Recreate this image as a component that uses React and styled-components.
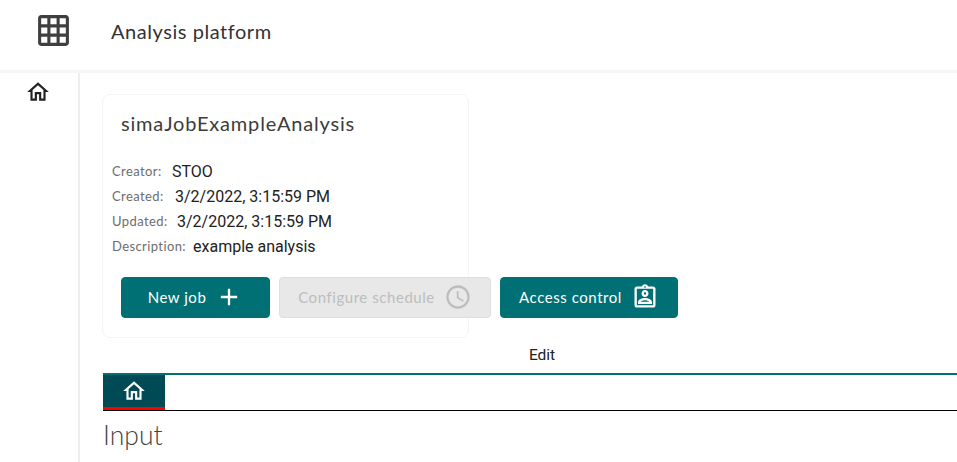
import React from "react";
import styled, { createGlobalStyle } from "styled-components";
// icons
import { MdGridOn, MdOutlineHome, MdAdd, MdOutlineAccessTime, MdOutlineAssignmentInd } from "react-icons/md";

const GlobalStyle = createGlobalStyle`
    html, body {
        margin: 0;
        padding: 0;
        background: #fff;
        overflow: hidden;
    }
    * {
        box-sizing: border-box;
    }
`;

function InfoLine({ label, value, labelWidth }) {
    return (
        <Line>
            <Label $width={labelWidth}>{label}</Label>
            <Value>{value}</Value>
        </Line>
    );
}

export default function App() {
    return (
        <Page>
            <GlobalStyle />
            <Header>
                <GridButton>
                    <MdGridOn />
                </GridButton>
                <AppTitle>Analysis platform</AppTitle>
            </Header>
            <Body>
                <Sidebar>
                    <MdOutlineHome />
                </Sidebar>
                <Content>
                    <Card>
                        <CardTitle>simaJobExampleAnalysis</CardTitle>
                        <Info>
                            <InfoLine label="Creator:" value="STOO" labelWidth={50} />
                            <InfoLine label="Created:" value="3/2/2022, 3:15:59 PM" labelWidth={53} />
                            <InfoLine label="Updated:" value="3/2/2022, 3:15:59 PM" labelWidth={55} />
                            <InfoLine label="Description:" value="example analysis" labelWidth={71} />
                        </Info>
                        <Actions>
                            <ActionButton $width={149}>
                                New job
                                <MdAdd />
                            </ActionButton>
                            <ActionButton $width={212} disabled>
                                Configure schedule
                                <MdOutlineAccessTime />
                            </ActionButton>
                            <ActionButton $width={178}>
                                Access control
                                <MdOutlineAssignmentInd />
                            </ActionButton>
                        </Actions>
                    </Card>
                    <EditLink>Edit</EditLink>
                    <TabBar>
                        <HomeTab>
                            <MdOutlineHome />
                        </HomeTab>
                    </TabBar>
                    <SectionTitle>Input</SectionTitle>
                </Content>
            </Body>
        </Page>
    );
}

const Page = styled.div`
    width: 957px;
    height: 462px;
    overflow: hidden;
    display: flex;
    flex-direction: column;
    font-family: "Lato", sans-serif;
`;
const Header = styled.header`
    height: 73px;
    flex-shrink: 0;
    display: flex;
    align-items: center;
    padding: 0 0 9px 33px;
    border-bottom: 3px solid #f6f6f6;
`;
const GridButton = styled.div`
    width: 40px;
    height: 40px;
    display: flex;
    align-items: center;
    justify-content: center;
    color: #3f3f3f;
    & svg {
        font-size: 37px;
    }
`;
const AppTitle = styled.h1`
    margin: 0 0 0 38px;
    font-size: 20px;
    font-weight: 400;
    letter-spacing: 0.55px;
    color: #333;
`;
const Body = styled.div`
    flex: 1;
    display: flex;
    min-height: 0;
`;
const Sidebar = styled.nav`
    width: 80px;
    flex-shrink: 0;
    padding: 6px 0 0 25px;
    border-right: 2px solid #eee;
    color: #222;
    & svg {
        display: block;
        font-size: 26px;
    }
`;
const Content = styled.main`
    flex: 1;
    min-width: 0;
    padding: 21px 0 0 23px;
`;
const Card = styled.section`
    width: 367px;
    height: 244px;
    margin-left: -1px;
    padding: 16px 18px 0;
    border: 1px solid #f5f5f5;
    border-radius: 8px;
`;
const CardTitle = styled.h2`
    margin: 0;
    font-size: 20px;
    line-height: 24px;
    font-weight: 400;
    letter-spacing: 0.82px;
    color: #3c3c3c;
`;
const Info = styled.div`
    margin: 26px 0 0 -9px;
    display: flex;
    flex-direction: column;
    gap: 5px;
`;
const Line = styled.div`
    display: flex;
    align-items: center;
    gap: 10px;
    height: 20px;
`;
const Label = styled.span`
    width: ${(p) => p.$width}px;
    white-space: nowrap;
    font-size: 13px;
    letter-spacing: 0.4px;
    color: #6d6d6d;
`;
const Value = styled.span`
    font-family: "Roboto", sans-serif;
    font-size: 16px;
    color: #222;
`;
const Actions = styled.div`
    margin-top: 21px;
    display: flex;
    gap: 9px;
    width: 560px;
`;
const ActionButton = styled.button`
    width: ${(p) => p.$width}px;
    height: 41px;
    flex-shrink: 0;
    display: flex;
    align-items: center;
    justify-content: center;
    gap: 9px;
    padding: 0 0 2px;
    font-family: "Lato", sans-serif;
    font-size: 15px;
    letter-spacing: 0.55px;
    border-radius: 4px;
    color: #fff;
    background: #007075;
    border: 1px solid #007075;
    & svg {
        font-size: 28px;
    }
    &:disabled {
        color: #bdbdbd;
        background: #e8e8e8;
        border-color: #dedede;
    }
`;
const EditLink = styled.div`
    margin-top: 7px;
    width: 878px;
    text-align: center;
    font-family: "Roboto", sans-serif;
    font-size: 15.5px;
    line-height: 20px;
    color: #222;
`;
const TabBar = styled.div`
    margin-top: 8px;
    height: 38px;
    border-top: 2px solid #007075;
    border-bottom: 1px solid #000;
`;
const HomeTab = styled.div`
    width: 62px;
    height: 35px;
    display: flex;
    align-items: center;
    justify-content: center;
    background: #004a55;
    border-bottom: 3px solid #ff0000;
    color: #fff;
    & svg {
        font-size: 26px;
    }
`;
const SectionTitle = styled.h3`
    margin: 8px 0 0;
    font-size: 26.5px;
    line-height: 32px;
    font-weight: 300;
    color: #444;
`;
